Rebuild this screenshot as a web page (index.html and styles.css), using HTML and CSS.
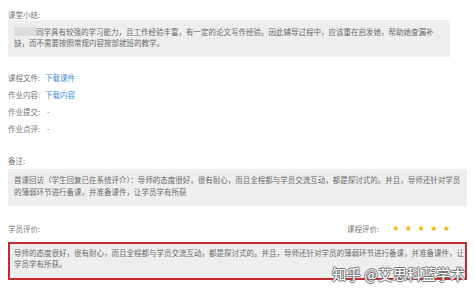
FILE: index.html
```html
<!DOCTYPE html>
<html lang="zh">
<head>
<meta charset="utf-8">
<link rel="stylesheet" href="styles.css">
</head>
<body>
<div class="page">
  <div class="title t-summary">课堂小结:</div>
  <div class="box box-summary"><span class="blur"></span>同学具有较强的学习能力，且工作经验丰富，有一定的论文写作经验。因此辅导过程中，应该重在启发她，帮助她查漏补缺，而不需要按照常规内容按部就班的教学。</div>

  <div class="fields">
    <div class="field"><span class="label">课程文件:</span><span class="link">下载课件</span></div>
    <div class="field"><span class="label">作业内容:</span><span class="link">下载内容</span></div>
    <div class="field"><span class="label">作业提交:</span><span class="value">-</span></div>
    <div class="field"><span class="label">作业点评:</span><span class="value">-</span></div>
  </div>

  <div class="title t-remark">备注:</div>
  <div class="box box-remark">首课回访（学生回复已在系统评介）：导师的态度很好，很有耐心，而且全程都与学员交流互动，都是探讨式的。并且，导师还针对学员的薄弱环节进行备课，并准备课件，让学员学有所获</div>

  <div class="rating-row">
    <span class="title">学员评价:</span>
    <span class="course-rating"><span class="rlabel">课程评价:</span><span class="stars"><span>★</span><span>★</span><span>★</span><span>★</span><span>★</span></span></span>
  </div>
  <div class="box box-review">导师的态度很好，很有耐心，而且全程都与学员交流互动，都是探讨式的。并且，导师还针对学员的薄弱环节进行备课，并准备课件，让学员学有所获。</div>

  <div class="watermark">知乎 @艾思科蓝学术</div>
</div>
</body>
</html>
```

FILE: styles.css
```css
* { box-sizing: border-box; }
html, body { margin: 0; padding: 0; background: #fff; }
body {
  font-family: "Noto Sans CJK SC", "Microsoft YaHei", sans-serif;
  font-size: 7.5px;
  color: #666;
  width: 474px;
  height: 297px;
  overflow: hidden;
}
.page {
  position: relative;
  padding: 9px 0 0 8px;
  width: 474px;
  height: 297px;
}
.title {
  line-height: 11px;
  height: 11px;
  color: #777;
}
.box {
  background: #eeeeee;
  color: #6a6a6a;
}
.box-summary {
  width: 442px;
  margin-top: 0;
  padding: 6px 12px 9px 6px;
  line-height: 11px;
  height: 37px;
}
.blur {
  display: inline-block;
  width: 22px;
  height: 9px;
  background: #dcdcdc;
  vertical-align: -1px;
}
.fields { margin-top: 12px; }
.field {
  display: flex;
  height: 17px;
  line-height: 17px;
}
.label { width: 37px; color: #777; }
.link { color: #3d8ed8; }
.value { color: #777; padding-left: 2px; }
.t-remark { margin-top: 18px; }
.box-remark {
  width: 459px;
  margin-top: 3px;
  padding: 5px 4px 8px 6px;
  line-height: 12px;
  height: 37px;
}
.rating-row {
  display: flex;
  justify-content: space-between;
  align-items: center;
  width: 442px;
  margin-top: 17px;
  height: 11px;
}
.course-rating { display: flex; align-items: center; }
.rlabel { color: #777; margin-right: 13px; }
.stars { display: flex; gap: 5.5px; }
.stars span {
  color: #f2b400;
  font-family: "DejaVu Sans", sans-serif;
  font-size: 8px;
  line-height: 11px;
}
.box-review {
  width: 459px;
  margin-top: 8px;
  border: 2px solid #c42a32;
  padding: 3px 1px 8px 4px;
  line-height: 11px;
  height: 38px;
}
.watermark {
  position: absolute;
  left: 332px;
  top: 265px;
  font-size: 14.5px;
  line-height: 18px;
  white-space: nowrap;
  color: #fff;
  text-shadow: 1px 0 0 #777, -1px 0 0 #777, 0 1px 0 #777, 0 -1px 0 #777, 0 0 2px rgba(0,0,0,0.3);
}
```
